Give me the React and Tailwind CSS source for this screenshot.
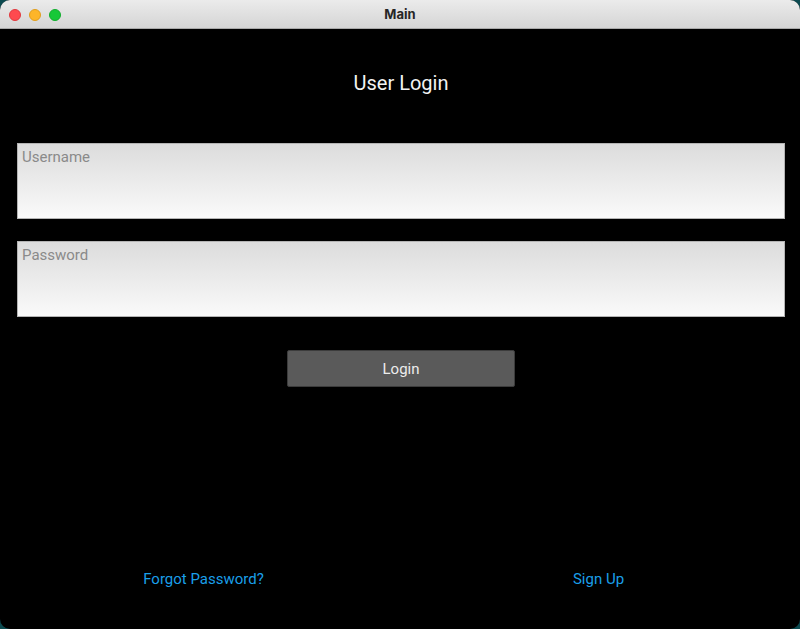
export default function App() {
  return (
    <div className="w-[800px] h-[629px] bg-[#0c4a50]">
      <div className="h-full flex flex-col rounded-[10px] overflow-hidden bg-black">
        {/* Title bar */}
        <div className="h-[29px] shrink-0 relative flex items-center justify-center bg-gradient-to-b from-[#ebebeb] to-[#d5d5d5] border-b border-[#a9a9a9]">
          <div className="absolute left-[9px] top-[9px] flex gap-[8px]">
            <span className="w-3 h-3 rounded-full bg-[#fe4a4f] border border-[#e0383d]" />
            <span className="w-3 h-3 rounded-full bg-[#fdb529] border border-[#e09d1b]" />
            <span className="w-3 h-3 rounded-full bg-[#16c838] border border-[#10ad2c]" />
          </div>
          <span className="pt-[2px] text-[13px] font-bold text-[#262626] font-['Inter','Liberation_Sans',sans-serif]">
            Main
          </span>
        </div>

        {/* Content */}
        <div className="flex-1 flex flex-col pl-[17px] pr-[15px] font-['Roboto','Liberation_Sans',sans-serif]">
          <h1 className="mt-[42px] h-6 leading-6 text-center text-[20px] text-[#f2f2f2]">
            User Login
          </h1>

          <input
            type="text"
            placeholder="Username"
            className="mt-[48px] h-[76px] w-full px-1 pt-[4px] pb-[52px] text-[15px] leading-[18px] border border-[#b4b4b4] bg-gradient-to-b from-[#dcdcdc] to-[#fafafa] text-[#333] placeholder:text-[#8a8a8a] outline-none"
          />
          <input
            type="password"
            placeholder="Password"
            className="mt-[22px] h-[76px] w-full px-1 pt-[4px] pb-[52px] text-[15px] leading-[18px] border border-[#b4b4b4] bg-gradient-to-b from-[#dcdcdc] to-[#fafafa] text-[#333] placeholder:text-[#8a8a8a] outline-none"
          />

          <div className="mt-[33px] flex justify-center">
            <button className="w-[228px] h-[37px] pt-[2px] rounded-[2px] bg-[#5a5a5a] border border-[#3c3c3c] text-[15px] text-[#ececec]">
              Login
            </button>
          </div>

          <div className="mt-[182px] -ml-[11px] w-[790px] grid grid-cols-2 text-[15px] leading-5 text-[#1a9fe9]">
            <a href="#" className="text-center">Forgot Password?</a>
            <a href="#" className="text-center">Sign Up</a>
          </div>
        </div>
      </div>
    </div>
  )
}
